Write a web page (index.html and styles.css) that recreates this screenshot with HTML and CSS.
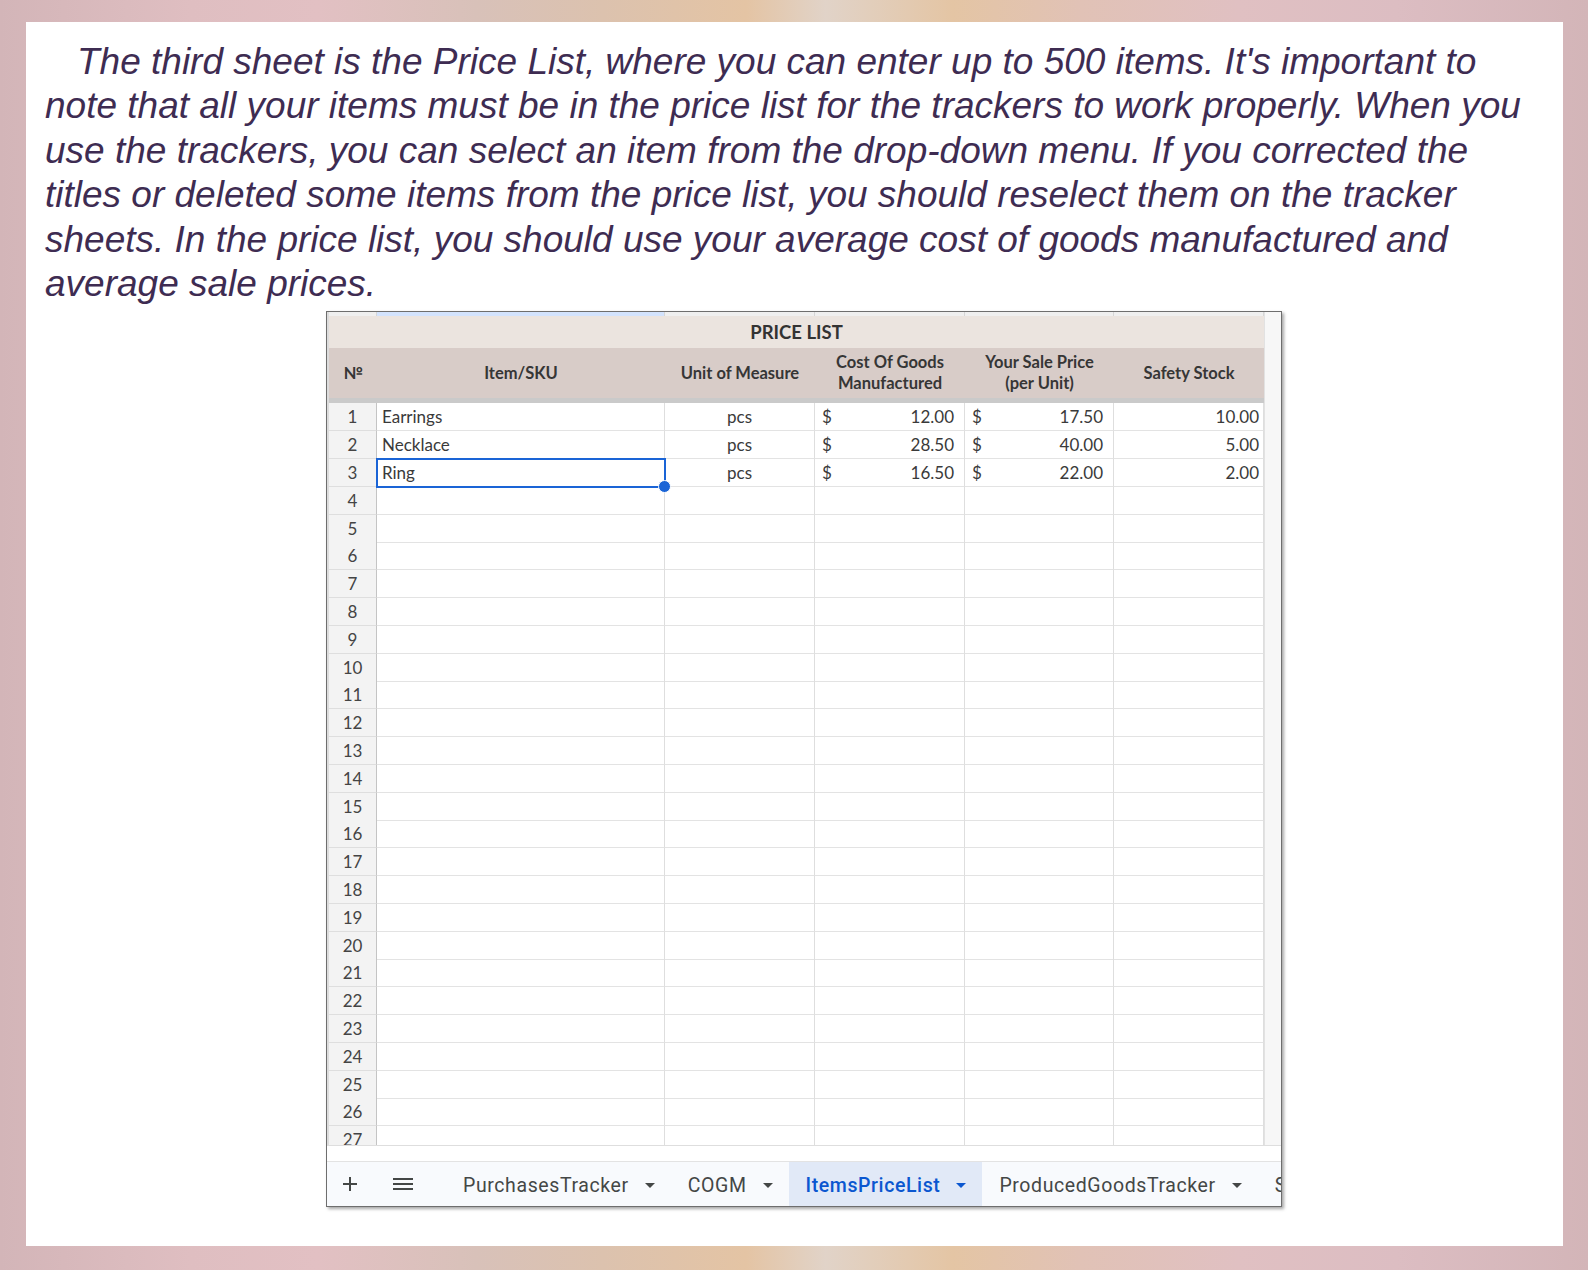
FILE: index.html
```html
<!DOCTYPE html>
<html lang="en">
<head>
<meta charset="utf-8">
<title>Price List</title>
<link rel="stylesheet" href="styles.css">
</head>
<body>
<main class="panel">
  <p class="intro">The third sheet is the Price List, where you can enter up to 500 items. It's important to note that all your items must be in the price list for the trackers to work properly. When you use the trackers, you can select an item from the drop-down menu. If you corrected the titles or deleted some items from the price list, you should reselect them on the tracker sheets. In the price list, you should use your average cost of goods manufactured and average sale prices.</p>

  <section class="sheet">
    <div class="grid-area">
      <div class="main">
        <div class="colhead">
          <div class="ch"></div><div class="ch sel"></div><div class="ch"></div><div class="ch"></div><div class="ch"></div><div class="ch"></div>
        </div>
        <div class="title">PRICE LIST</div>
        <div class="header">
          <div class="h">№</div>
          <div class="h">Item/SKU</div>
          <div class="h">Unit of Measure</div>
          <div class="h">Cost Of Goods<br>Manufactured</div>
          <div class="h">Your Sale Price<br>(per Unit)</div>
          <div class="h">Safety Stock</div>
        </div>
        <div class="freeze"></div>
        <div class="rows">
          <div class="row"><div class="rn">1</div><div class="c">Earrings</div><div class="c unit">pcs</div><div class="c money"><span>$</span><span>12.00</span></div><div class="c money"><span>$</span><span>17.50</span></div><div class="c num">10.00</div></div>
          <div class="row"><div class="rn">2</div><div class="c">Necklace</div><div class="c unit">pcs</div><div class="c money"><span>$</span><span>28.50</span></div><div class="c money"><span>$</span><span>40.00</span></div><div class="c num">5.00</div></div>
          <div class="row"><div class="rn">3</div><div class="c active">Ring<span class="handle"></span></div><div class="c unit">pcs</div><div class="c money"><span>$</span><span>16.50</span></div><div class="c money"><span>$</span><span>22.00</span></div><div class="c num">2.00</div></div>
          <div class="row"><div class="rn">4</div><div class="c"></div><div class="c"></div><div class="c"></div><div class="c"></div><div class="c"></div></div>
          <div class="row"><div class="rn">5</div><div class="c"></div><div class="c"></div><div class="c"></div><div class="c"></div><div class="c"></div></div>
          <div class="row"><div class="rn">6</div><div class="c"></div><div class="c"></div><div class="c"></div><div class="c"></div><div class="c"></div></div>
          <div class="row"><div class="rn">7</div><div class="c"></div><div class="c"></div><div class="c"></div><div class="c"></div><div class="c"></div></div>
          <div class="row"><div class="rn">8</div><div class="c"></div><div class="c"></div><div class="c"></div><div class="c"></div><div class="c"></div></div>
          <div class="row"><div class="rn">9</div><div class="c"></div><div class="c"></div><div class="c"></div><div class="c"></div><div class="c"></div></div>
          <div class="row"><div class="rn">10</div><div class="c"></div><div class="c"></div><div class="c"></div><div class="c"></div><div class="c"></div></div>
          <div class="row"><div class="rn">11</div><div class="c"></div><div class="c"></div><div class="c"></div><div class="c"></div><div class="c"></div></div>
          <div class="row"><div class="rn">12</div><div class="c"></div><div class="c"></div><div class="c"></div><div class="c"></div><div class="c"></div></div>
          <div class="row"><div class="rn">13</div><div class="c"></div><div class="c"></div><div class="c"></div><div class="c"></div><div class="c"></div></div>
          <div class="row"><div class="rn">14</div><div class="c"></div><div class="c"></div><div class="c"></div><div class="c"></div><div class="c"></div></div>
          <div class="row"><div class="rn">15</div><div class="c"></div><div class="c"></div><div class="c"></div><div class="c"></div><div class="c"></div></div>
          <div class="row"><div class="rn">16</div><div class="c"></div><div class="c"></div><div class="c"></div><div class="c"></div><div class="c"></div></div>
          <div class="row"><div class="rn">17</div><div class="c"></div><div class="c"></div><div class="c"></div><div class="c"></div><div class="c"></div></div>
          <div class="row"><div class="rn">18</div><div class="c"></div><div class="c"></div><div class="c"></div><div class="c"></div><div class="c"></div></div>
          <div class="row"><div class="rn">19</div><div class="c"></div><div class="c"></div><div class="c"></div><div class="c"></div><div class="c"></div></div>
          <div class="row"><div class="rn">20</div><div class="c"></div><div class="c"></div><div class="c"></div><div class="c"></div><div class="c"></div></div>
          <div class="row"><div class="rn">21</div><div class="c"></div><div class="c"></div><div class="c"></div><div class="c"></div><div class="c"></div></div>
          <div class="row"><div class="rn">22</div><div class="c"></div><div class="c"></div><div class="c"></div><div class="c"></div><div class="c"></div></div>
          <div class="row"><div class="rn">23</div><div class="c"></div><div class="c"></div><div class="c"></div><div class="c"></div><div class="c"></div></div>
          <div class="row"><div class="rn">24</div><div class="c"></div><div class="c"></div><div class="c"></div><div class="c"></div><div class="c"></div></div>
          <div class="row"><div class="rn">25</div><div class="c"></div><div class="c"></div><div class="c"></div><div class="c"></div><div class="c"></div></div>
          <div class="row"><div class="rn">26</div><div class="c"></div><div class="c"></div><div class="c"></div><div class="c"></div><div class="c"></div></div>
          <div class="row"><div class="rn">27</div><div class="c"></div><div class="c"></div><div class="c"></div><div class="c"></div><div class="c"></div></div>
        </div>
      </div>
      <div class="vscroll"></div>
    </div>
    <div class="hscroll"></div>
    <nav class="tabbar">
      <span class="icon-btn plus"><svg width="18" height="18" viewBox="0 0 18 18"><path d="M9 2v14M2 9h14" stroke="#444746" stroke-width="2" fill="none"/></svg></span>
      <span class="icon-btn menu"><svg width="22" height="16" viewBox="0 0 22 16"><path d="M1 3h20M1 8h20M1 13h20" stroke="#444746" stroke-width="2" fill="none"/></svg></span>
      <span class="tab">PurchasesTracker<svg class="caret" width="10" height="5" viewBox="0 0 10 5"><path d="M0 0h10L5 5z"/></svg></span>
      <span class="tab">COGM<svg class="caret" width="10" height="5" viewBox="0 0 10 5"><path d="M0 0h10L5 5z"/></svg></span>
      <span class="tab current">ItemsPriceList<svg class="caret" width="10" height="5" viewBox="0 0 10 5"><path d="M0 0h10L5 5z"/></svg></span>
      <span class="tab">ProducedGoodsTracker<svg class="caret" width="10" height="5" viewBox="0 0 10 5"><path d="M0 0h10L5 5z"/></svg></span>
      <span class="tab">SalesTracker</span>
    </nav>
  </section>
</main>
</body>
</html>
```

FILE: styles.css
```css
* { box-sizing: border-box; }

html, body {
  margin: 0;
  padding: 0;
}

body {
  width: 1588px;
  height: 1270px;
  overflow: hidden;
  background: linear-gradient(to right,
    #d3b5b8 0%, #dfbec1 12%, #e2c0c3 20%, #d8c1b9 30%, #dcc2ae 38%,
    #e4c4a4 47%, #e1d3c8 52%, #e4c5a4 60%, #e1c2b6 68%, #e0c0c2 78%,
    #dcbdc2 88%, #d3b5b8 100%);
  padding: 22px 25px 24px 26px;
}

.panel {
  background: #ffffff;
  height: 1224px;
  padding: 18px 28px 0 19px;
  overflow: hidden;
}

.intro {
  margin: 0;
  font-family: "Liberation Sans", Arial, sans-serif;
  font-style: italic;
  font-size: 37px;
  line-height: 44.4px;
  color: #3e2c52;
  text-indent: 32px;
}

/* ---------- spreadsheet ---------- */
.sheet {
  margin: 5px 0 0 281px;
  width: 956px;
  border: 1px solid #6e6e6e;
  box-shadow: 2px 2px 3px rgba(0, 0, 0, 0.35);
  background: #fff;
  font-family: Lato, "Open Sans", sans-serif;
  color: #3a3a3a;
}

.grid-area {
  display: flex;
}

.main {
  width: 937px;
  border-left: 2px solid #dcdcdc;
}

.vscroll {
  width: 17px;
  background: #f7f7f7;
  border-left: 1px solid #e2e2e2;
}

.colhead,
.header,
.row {
  display: grid;
  grid-template-columns: 48px 288px 150px 150px 149px 150px;
}

.colhead {
  height: 4px;
  background: #efefef;
}
.ch { border-right: 1px solid #d6d6d6; }
.ch.sel { background: #d3e3fd; }

.title {
  height: 32px;
  background: #ebe4df;
  text-align: center;
  font-weight: 700;
  font-size: 18.5px;
  line-height: 32px;
  color: #333;
}

.header {
  height: 50px;
  background: #d8ccc8;
}

.h {
  display: flex;
  align-items: center;
  justify-content: center;
  text-align: center;
  font-weight: 700;
  font-size: 16.5px;
  line-height: 21px;
  color: #363636;
}

.freeze {
  height: 5px;
  background: #cacaca;
}

.rows {
  height: 742px;
  overflow: hidden;
}

.row {
  height: 27.8px;
  font-size: 17px;
  line-height: 27px;
}

.rn {
  background: #f3f3f3;
  border-right: 1px solid #c4c4c4;
  border-bottom: 1px solid #dedede;
  text-align: center;
  color: #444;
}

.c {
  position: relative;
  border-right: 1px solid #dedede;
  border-bottom: 1px solid #e3e3e3;
  padding: 0 5px;
  white-space: nowrap;
  color: #3a3a3a;
}

.c.unit { text-align: center; }

.c.money {
  display: flex;
  justify-content: space-between;
  padding: 0 10px 0 7px;
}

.c.num {
  text-align: right;
  padding-right: 4px;
}

.c.active {
  outline: 2px solid #1a64d6;
  outline-offset: -1px;
  z-index: 1;
}

.handle {
  position: absolute;
  right: -7px;
  bottom: -7px;
  width: 13px;
  height: 13px;
  border-radius: 50%;
  background: #1a64d6;
  border: 1px solid #fff;
}

.hscroll {
  height: 17px;
  border-top: 1px solid #dedede;
  border-bottom: 1px solid #e3e3e3;
  background: #fff;
}

.tabbar {
  height: 44px;
  background: #f8fafd;
  display: flex;
  align-items: stretch;
  overflow: hidden;
  white-space: nowrap;
  font-family: Roboto, "Open Sans", sans-serif;
  font-size: 19.5px;
  letter-spacing: 0.6px;
  color: #444746;
}

.icon-btn {
  display: flex;
  align-items: center;
  justify-content: center;
  flex-shrink: 0;
}
.icon-btn.plus { width: 46px; }
.icon-btn.menu { width: 60px; }

.tab {
  display: flex;
  align-items: center;
  padding: 3px 16px 0 17px;
  flex-shrink: 0;
}
.tab:nth-of-type(3) { margin-left: 13px; }

.caret {
  margin-left: 16px;
  fill: #444746;
}

.tab.current {
  background: #e1e9f7;
  color: #0b57d0;
  font-weight: 500;
}
.tab.current .caret { fill: #0b57d0; }
```
